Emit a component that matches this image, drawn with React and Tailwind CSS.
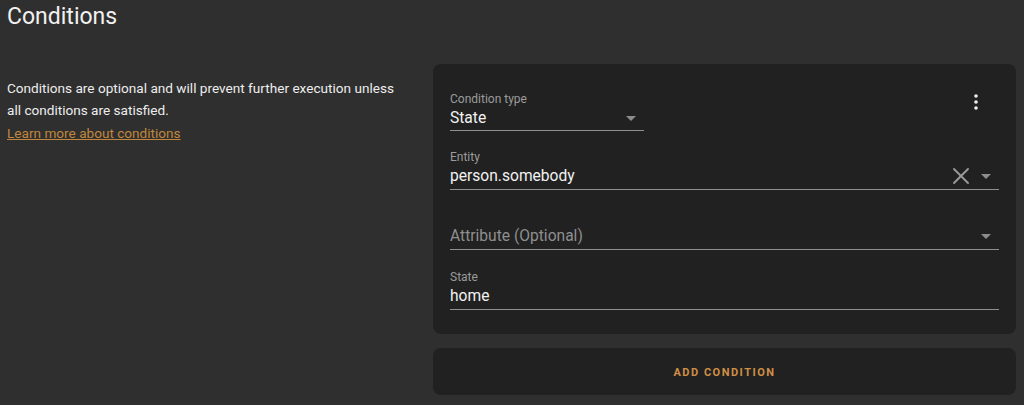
import { X } from "lucide-react";

function Caret() {
  return (
    <svg width="10" height="5" viewBox="0 0 10 5" className="shrink-0">
      <path d="M0 0 L10 0 L5 5 Z" fill="#8d8d8d" />
    </svg>
  );
}

function Field({ label, value, placeholder, clear, caret, className = "" }) {
  return (
    <div className={"border-b border-[#8f8f8f] " + className}>
      {label && <div className="text-[12px] leading-[14px] text-[#9b9b9b]">{label}</div>}
      <div className="flex items-center h-[24px]">
        {value ? (
          <span className="flex-1 pt-[2px] text-[15.6px] text-[#f2f2f2]">{value}</span>
        ) : (
          <span className="flex-1 pt-[2px] text-[15.6px] text-[#8f8f8f]">{placeholder}</span>
        )}
        {clear && <X size={28} strokeWidth={1.6} className="text-[#9a9a9a] mr-[6px]" />}
        {caret && <div className="mr-[8px]"><Caret /></div>}
      </div>
    </div>
  );
}

export default function App() {
  return (
    <div className="w-[1024px] h-[405px] bg-[#2f2f2f] overflow-hidden" style={{ fontFamily: "Roboto, 'Liberation Sans', sans-serif" }}>
      <h1 className="pl-[7px] pt-[2px] text-[23px] leading-[30px] text-[#f1f1f1]">Conditions</h1>
      <div className="flex mt-[32px]">
        <div className="w-[433px] pl-[7px] pr-[34px] pt-[13px]">
          <p className="text-[13.6px] leading-[22px] text-[#ededed]">
            Conditions are optional and will prevent further execution unless all conditions are satisfied.
          </p>
          <a className="block mt-[1px] text-[13.6px] leading-[22px] text-[#c0873c] underline">Learn more about conditions</a>
        </div>
        <div className="flex-1 mr-[8px] flex flex-col gap-[14px]">
          <div className="bg-[#212121] rounded-[8px] px-[17px] pt-[28px] pb-[24px]">
            <div className="flex justify-between">
              <Field label="Condition type" value="State" caret className="w-[194px]" />
              <svg width="24" height="24" viewBox="0 0 24 24" className="mr-[11px] mt-[-2px]">
                <circle cx="12" cy="6" r="1.8" fill="#f0f0f0" />
                <circle cx="12" cy="12" r="1.8" fill="#f0f0f0" />
                <circle cx="12" cy="18" r="1.8" fill="#f0f0f0" />
              </svg>
            </div>
            <Field label="Entity" value="person.somebody" clear caret className="mt-[19px] pb-[1px]" />
            <Field placeholder="Attribute (Optional)" caret className="mt-[34px] pb-[1px]" />
            <Field label="State" value="home" className="mt-[20px] pb-[1px]" />
          </div>
          <div className="bg-[#212121] rounded-[8px] h-[47px] flex items-center justify-center">
            <span className="pt-[3px] text-[11px] font-bold tracking-[1.5px] text-[#d08f45]">ADD CONDITION</span>
          </div>
        </div>
      </div>
    </div>
  );
}
